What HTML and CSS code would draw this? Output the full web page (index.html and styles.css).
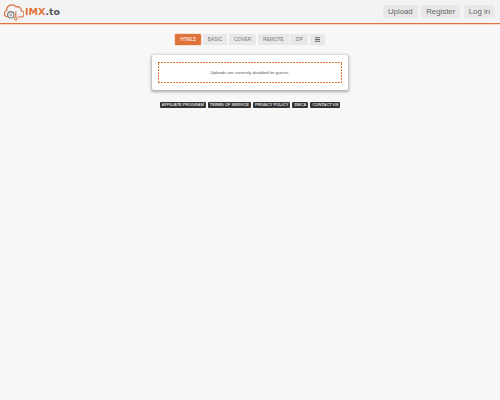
FILE: index.html
```html
<!DOCTYPE html>
<html lang="en">
<head>
<meta charset="utf-8">
<title>IMX.to</title>
<link rel="stylesheet" href="styles.css">
</head>
<body>
<header class="topbar">
  <a class="logo" href="#">
    <svg class="logo-icon" viewBox="0 0 20 18" width="20" height="18">
      <path d="M3.500 14A3.500 3.500 0 0 1 2.800 7.200 5.200 5.200 0 0 1 12.200 4 3.700 3.700 0 0 1 17.200 8 3 3 0 0 1 17.200 14H14" fill="none" stroke="#d9703f" stroke-width="1.200"/>
      <circle cx="6.800" cy="11.800" r="3.200" fill="none" stroke="#777" stroke-width="1.200"/>
      <circle cx="6.800" cy="11.800" r="1" fill="none" stroke="#777" stroke-width=".7"/>
      <path d="M11.800 8.500v6" fill="none" stroke="#d9703f" stroke-width="1.200"/>
      <circle cx="11.800" cy="15.800" r="1.400" fill="none" stroke="#d9703f" stroke-width="1"/>
    </svg>
    <span class="logo-text"><span class="logo-a">IMX</span><span class="logo-b">.to</span></span>
  </a>
  <nav class="topnav">
    <a href="#">Upload</a>
    <a href="#">Register</a>
    <a href="#">Log in</a>
  </nav>
</header>
<main class="content">
  <div class="tabs">
    <a class="tab active" href="#">HTML5</a>
    <a class="tab" href="#">BASIC</a>
    <a class="tab" href="#">COVER</a>
    <a class="tab" href="#">REMOTE</a>
    <a class="tab" href="#">ZIP</a>
    <a class="tab" href="#" aria-label="Menu">
      <svg class="menu-icon" viewBox="0 0 5 5" width="5" height="5"><path d="M0 .7h5M0 2.500h5M0 4.300h5" stroke="#666" stroke-width="1" fill="none"/></svg>
    </a>
  </div>
  <section class="card">
    <div class="notice">Uploads are currently disabled for guests.</div>
  </section>
  <footer class="links">
    <a href="#">AFFILIATE PROGRAM</a>
    <a href="#">TERMS OF SERVICE</a>
    <a href="#">PRIVACY POLICY</a>
    <a href="#">DMCA</a>
    <a href="#">CONTACT US</a>
  </footer>
</main>
</body>
</html>
```
FILE: styles.css
```css
* { box-sizing: border-box; }
html, body { margin: 0; height: 100%; }
body { background: #f7f7f7; font-family: "Liberation Sans", Arial, sans-serif; color: #555; }
a { text-decoration: none; color: inherit; }
.topbar {
  height: 24px;
  background: #f3f3f3;
  border-bottom: 1px solid #e0733a;
  display: flex;
  justify-content: space-between;
  align-items: center;
  padding: 0 5px 0 4px;
  box-shadow: 0 1px 0 #f8d8c4;
}
.logo { display: flex; align-items: center; gap: 1px; }
.logo-text { font-family: "DejaVu Sans", sans-serif; font-size: 9.500px; font-weight: bold; }
.logo-a { color: #e0733a; }
.logo-b { color: #555; }
.topnav { display: flex; gap: 3.500px; }
.topnav a {
  background: #e8e8e8;
  border-radius: 2px;
  font-size: 7.800px;
  line-height: 13px;
  padding: 0 5px;
  color: #666;
}
.content { display: flex; flex-direction: column; align-items: center; }
.tabs { display: flex; gap: 1.500px; margin-top: 10px; }
.tab {
  display: flex;
  align-items: center;
  background: #e8e8e8;
  font-size: 4.800px;
  height: 11px;
  padding: 0 5.200px;
  border-radius: 1px;
  color: #777;
}
.tab.active { background: #e0733a; color: #fff; box-shadow: 0 0 0 .5px #f3c7ac; }
.card {
  margin-top: 10px;
  width: 196px;
  height: 35px;
  padding: 7px 6px;
  background: #fff;
  border-radius: 2px;
  box-shadow: 0 1px 3px 1px rgba(0,0,0,.3);
}
.notice {
  height: 21px;
  background:
    repeating-linear-gradient(90deg, #e0733a 0 2px, transparent 2px 3px) top / 100% 1px no-repeat,
    repeating-linear-gradient(90deg, #e0733a 0 2px, transparent 2px 3px) bottom / 100% 1px no-repeat,
    repeating-linear-gradient(0deg, #e0733a 0 2px, transparent 2px 3px) left / 1px 100% no-repeat,
    repeating-linear-gradient(0deg, #e0733a 0 2px, transparent 2px 3px) right / 1px 100% no-repeat;
  font-size: 4.300px;
  line-height: 21px;
  text-align: center;
  color: #555;
}
.links { display: flex; gap: 2px; margin-top: 12px; }
.links a {
  background: #333;
  color: #ddd;
  font-size: 4px;
  font-weight: bold;
  line-height: 6px;
  padding: 0 2px;
  border-radius: 1px;
}
```
